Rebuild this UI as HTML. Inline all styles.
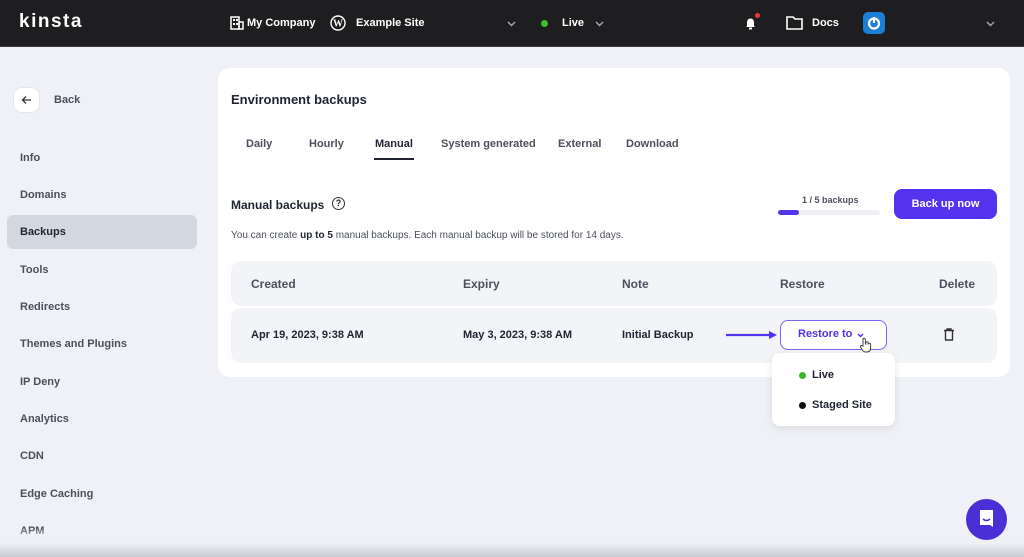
<!DOCTYPE html>
<html><head><meta charset="utf-8"><style>
*{margin:0;padding:0;box-sizing:border-box}
body{width:1024px;height:557px;overflow:hidden;background:#eff1f6;font-family:"Liberation Sans",Arial,sans-serif;position:relative;color:#1f2430}
.top{position:absolute;left:0;top:0;width:1024px;height:47px;background:#1e1e20;border-bottom:1px solid #3a3a3d;color:#fff;font-size:11px;font-weight:bold}
.top span,.top svg{position:absolute}
.abs{position:absolute}
.side{position:absolute;left:20px;font-size:11px;color:#4b505c;font-weight:bold}
.card{position:absolute;left:218px;top:68px;width:792px;height:309px;background:#fff;border-radius:12px}
.tab{position:absolute;top:138px;font-size:11px;color:#4b505c;font-weight:bold}
.th{position:absolute;top:277px;font-size:12px;color:#4b505c;font-weight:bold}
.td{position:absolute;top:329px;font-size:11px;color:#1f2430;font-weight:bold}
</style></head><body>
<div class="top">
<span style="left:19px;top:11px;font-size:19px;letter-spacing:1.5px;font-weight:bold">kinsta</span>
<svg style="left:230px;top:16px" width="14" height="14" viewBox="0 0 14 14"><rect x="1" y="1" width="8" height="12" fill="none" stroke="#fff" stroke-width="1.5"/><rect x="9" y="6" width="4" height="7" fill="none" stroke="#fff" stroke-width="1.5"/><rect x="3" y="3" width="2" height="2" fill="#fff"/><rect x="6" y="3" width="2" height="2" fill="#fff"/><rect x="3" y="7" width="2" height="2" fill="#fff"/><rect x="6" y="7" width="2" height="2" fill="#fff"/></svg>
<span style="left:247px;top:17px">My Company</span>
<svg style="left:330px;top:15px" width="16" height="16" viewBox="0 0 16 16"><circle cx="8" cy="8" r="7" fill="none" stroke="#fff" stroke-width="1.4"/><text x="8" y="11.5" font-size="10" text-anchor="middle" fill="#fff" font-family="Liberation Serif" font-weight="bold">W</text></svg>
<span style="left:356px;top:17px">Example Site</span>
<svg style="left:507px;top:21px" width="9" height="6" viewBox="0 0 9 6"><path d="M1 1l3.5 3.5L8 1" fill="none" stroke="#aaa" stroke-width="1.4"/></svg>
<span style="left:541px;top:20px;width:7px;height:7px;border-radius:50%;background:#3cc12c"></span>
<span style="left:562px;top:17px">Live</span>
<svg style="left:595px;top:21px" width="9" height="6" viewBox="0 0 9 6"><path d="M1 1l3.5 3.5L8 1" fill="none" stroke="#aaa" stroke-width="1.4"/></svg>
<svg style="left:744px;top:16px" width="13" height="14" viewBox="0 0 13 14"><path d="M3 10V6a3.5 3.5 0 017 0v4l1 1H2z" fill="#fff"/><rect x="5" y="11.5" width="3" height="2" fill="#fff"/></svg>
<span style="left:755px;top:13px;width:5px;height:5px;border-radius:50%;background:#e5383b"></span>
<svg style="left:786px;top:16px" width="17" height="14" viewBox="0 0 17 14"><path d="M1 1h6l2 2h7v10H1z" fill="none" stroke="#fff" stroke-width="1.6"/></svg>
<span style="left:812px;top:17px">Docs</span>
<span style="left:863px;top:12px;width:22px;height:22px;border-radius:5px;background:#1b7fd6"></span>
<svg style="left:866px;top:15px" width="16" height="16" viewBox="0 0 16 16"><circle cx="8" cy="8.5" r="5" fill="none" stroke="#fff" stroke-width="2.2"/><path d="M8 2v6" stroke="#fff" stroke-width="2.2"/></svg>
<svg style="left:986px;top:21px" width="9" height="6" viewBox="0 0 9 6"><path d="M1 1l3.5 3.5L8 1" fill="none" stroke="#aaa" stroke-width="1.4"/></svg>
</div>

<div class="abs" style="left:13px;top:87px;width:27px;height:26px;border-radius:9px;background:#fff;border:1px solid #e4e6ec"></div>
<svg class="abs" style="left:21px;top:95px" width="11" height="10" viewBox="0 0 11 10"><path d="M10 5H2M5 1.5L1.5 5 5 8.5" fill="none" stroke="#333" stroke-width="1.3"/></svg>
<div class="side" style="left:54px;top:94px">Back</div>
<div class="side" style="top:152px">Info</div>
<div class="side" style="top:189px">Domains</div>
<div class="abs" style="left:7px;top:215px;width:190px;height:34px;border-radius:6px;background:#d3d8e0"></div>
<div class="side" style="top:226px;color:#1f2430">Backups</div>
<div class="side" style="top:264px">Tools</div>
<div class="side" style="top:301px">Redirects</div>
<div class="side" style="top:338px">Themes and Plugins</div>
<div class="side" style="top:376px">IP Deny</div>
<div class="side" style="top:413px">Analytics</div>
<div class="side" style="top:450px">CDN</div>
<div class="side" style="top:488px">Edge Caching</div>
<div class="side" style="top:525px">APM</div>

<div class="card"></div>
<div class="abs" style="left:231px;top:92px;font-size:13px;font-weight:bold">Environment backups</div>
<div class="tab" style="left:246px">Daily</div>
<div class="tab" style="left:309px">Hourly</div>
<div class="tab" style="left:375px;color:#1f2430">Manual</div>
<div class="abs" style="left:374px;top:158px;width:40px;height:2px;background:#1f2430"></div>
<div class="tab" style="left:441px">System generated</div>
<div class="tab" style="left:558px">External</div>
<div class="tab" style="left:626px">Download</div>
<div class="abs" style="left:231px;top:198px;font-size:12px;font-weight:bold">Manual backups</div>
<div class="abs" style="left:332px;top:197px;width:13px;height:13px;border-radius:50%;border:1.3px solid #333;font-size:9px;text-align:center;line-height:11px;font-weight:bold">?</div>
<div class="abs" style="left:231px;top:230px;font-size:10px;color:#4b505c">You can create <b style="color:#1f2430">up to 5</b> manual backups. Each manual backup will be stored for 14 days.</div>
<div class="abs" style="left:802px;top:195px;font-size:9px;color:#4b505c;font-weight:bold">1 / 5 backups</div>
<div class="abs" style="left:778px;top:210px;width:102px;height:5px;border-radius:3px;background:#eef0f5"></div>
<div class="abs" style="left:778px;top:210px;width:21px;height:5px;border-radius:3px;background:#5333ed"></div>
<div class="abs" style="left:894px;top:189px;width:103px;height:30px;border-radius:8px;background:#5333ed;color:#fff;font-size:11px;font-weight:bold;text-align:center;line-height:30px">Back up now</div>

<div class="abs" style="left:231px;top:261px;width:766px;height:45px;border-radius:10px;background:#f3f4f7"></div>
<div class="abs" style="left:231px;top:308px;width:766px;height:55px;border-radius:10px;background:#f3f4f7"></div>
<div class="th" style="left:251px">Created</div>
<div class="th" style="left:463px">Expiry</div>
<div class="th" style="left:622px">Note</div>
<div class="th" style="left:780px">Restore</div>
<div class="th" style="left:939px">Delete</div>
<div class="td" style="left:251px">Apr 19, 2023, 9:38 AM</div>
<div class="td" style="left:463px">May 3, 2023, 9:38 AM</div>
<div class="td" style="left:622px">Initial Backup</div>
<svg class="abs" style="left:725px;top:330px" width="55" height="10" viewBox="0 0 55 10"><path d="M1 5h45" stroke="#5333ed" stroke-width="2.2"/><path d="M44 1l8 4-8 4z" fill="#5333ed"/></svg>
<div class="abs" style="left:780px;top:320px;width:107px;height:30px;border-radius:8px;border:1.5px solid #7d65f0;background:#fff;color:#5333ed;font-size:11px;font-weight:bold;line-height:27px;padding-left:17px">Restore to</div>
<svg class="abs" style="left:857px;top:333px" width="7" height="5" viewBox="0 0 7 5"><path d="M1 1l2.5 2.5L6 1" fill="none" stroke="#5333ed" stroke-width="1.4"/></svg>
<svg class="abs" style="left:859px;top:337px" width="14" height="16" viewBox="0 0 14 16"><path d="M4 9V2.5a1.2 1.2 0 012.4 0V7h.4V6a1.2 1.2 0 012.4 0v1.5a1.2 1.2 0 012.4 0V11c0 2.5-1.5 4-4 4H6.5C5 15 4 14 3 12.5L1.5 10a1.1 1.1 0 011.8-1.2z" fill="#fff" stroke="#444" stroke-width="1"/></svg>
<svg class="abs" style="left:943px;top:328px" width="12" height="13" viewBox="0 0 12 13"><path d="M1 2.5h10M4 2.5V1h4v1.5M2.5 2.5V12h7V2.5" fill="none" stroke="#333" stroke-width="1.4"/></svg>

<div class="abs" style="left:772px;top:353px;width:123px;height:73px;border-radius:8px;background:#fff;box-shadow:0 2px 8px rgba(0,0,0,.1)"></div>
<div class="abs" style="left:799px;top:372px;width:7px;height:7px;border-radius:50%;background:#3cb52a"></div>
<div class="abs" style="left:812px;top:369px;font-size:11px;font-weight:bold">Live</div>
<div class="abs" style="left:799px;top:402px;width:7px;height:7px;border-radius:50%;background:#111"></div>
<div class="abs" style="left:812px;top:399px;font-size:11px;font-weight:bold">Staged Site</div>

<div class="abs" style="left:966px;top:499px;width:41px;height:41px;border-radius:50%;background:#4a2ed6"></div>
<svg class="abs" style="left:978px;top:509px" width="17" height="20" viewBox="0 0 17 20"><path d="M2 1h13v17l-3-2H2z" fill="#fff"/><path d="M5 10q3.5 3 7 0" stroke="#4a2ed6" stroke-width="1.5" fill="none"/></svg>
<div class="abs" style="left:0;top:528px;width:200px;height:18px;background:linear-gradient(rgba(239,241,246,0),#eff1f6 70%)"></div>
<div class="abs" style="left:0;top:543px;width:1024px;height:14px;background:linear-gradient(#eff1f6,#c9cbd1)"></div>
</body></html>
